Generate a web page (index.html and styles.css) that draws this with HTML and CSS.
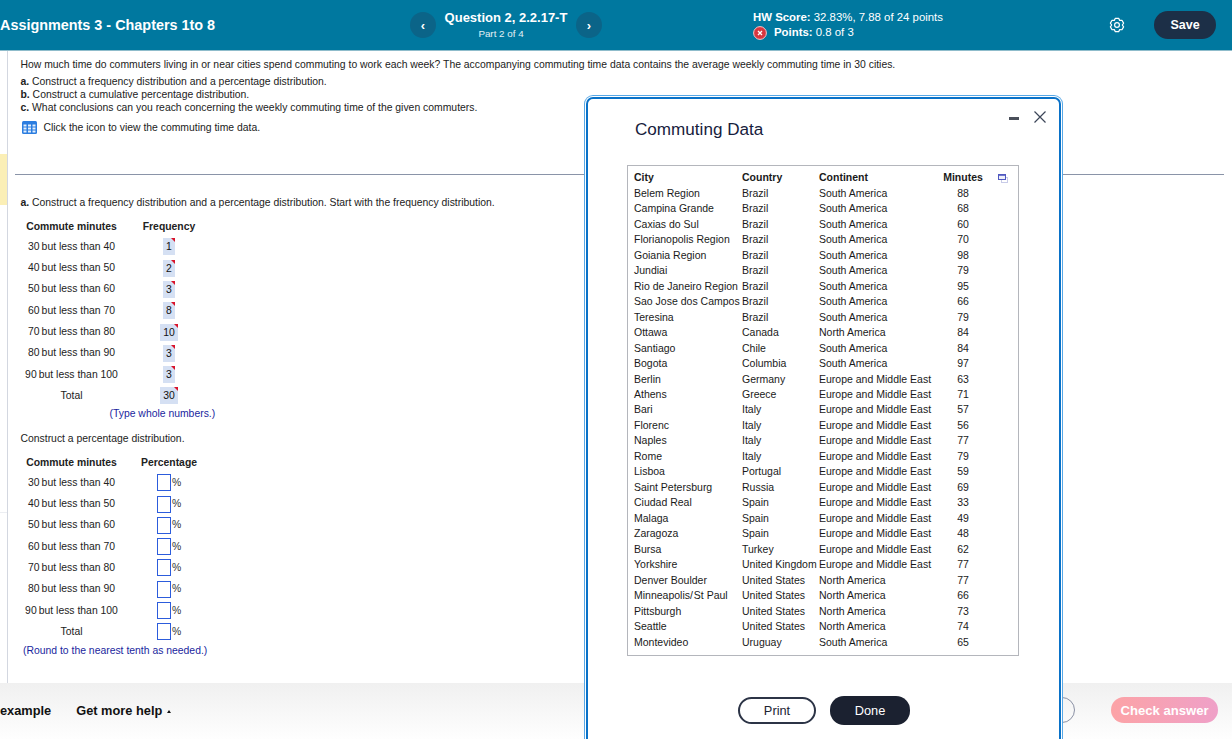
FILE: index.html
```html
<!DOCTYPE html>
<html lang="en">
<head>
<meta charset="utf-8">
<title>Assignments 3 - Chapters 1to 8</title>
<link rel="stylesheet" href="styles.css">
</head>
<body>
<div class="page">
  <header class="topbar">
    <h1 class="title">Assignments 3 - Chapters 1to 8</h1>
    <div class="nav">
      <button class="round">&#8249;</button>
      <div class="qinfo"><div class="qname">Question 2, 2.2.17-T</div><div class="qpart">Part 2 of 4</div></div>
      <button class="round">&#8250;</button>
    </div>
    <div class="score">
      <div><b>HW Score:</b> 32.83%, 7.88 of 24 points</div>
      <div class="points">
        <svg class="erricon" viewBox="0 0 14 14" width="14" height="14"><circle cx="7" cy="7" r="6.4" fill="#d8363f" stroke="#f3c9cb" stroke-width="1"/><path d="M5 5l4 4M9 5l-4 4" stroke="#fff" stroke-width="1.3" fill="none"/></svg>
        <span><b>Points:</b> 0.8 of 3</span>
      </div>
    </div>
    <svg class="gear" viewBox="0 0 24 24" width="16" height="16" fill="none" stroke="#fff" stroke-width="1.8" stroke-linejoin="round"><path d="M9.510 2.010H14.490L16 5.070L19.410 4.840L21.900 9.160L20 12L21.900 14.840L19.410 19.160L16 18.930L14.490 21.990H9.510L8 18.930L4.590 19.160L2.100 14.840L4 12L2.100 9.160L4.590 4.840L8 5.070Z"/><circle cx="12" cy="12" r="3.600"/></svg>
    <button class="save">Save</button>
  </header>

  <div class="middle">
    <aside class="gutter"><div class="tab"></div><div class="tick"></div></aside>
    <main class="content">
      <section class="question">
        <p class="lead">How much time do commuters living in or near cities spend commuting to work each week? The accompanying commuting time data contains the average weekly commuting time in 30 cities.</p>
        <p class="step"><b>a.</b> Construct a frequency distribution and a percentage distribution.</p>
        <p class="step"><b>b.</b> Construct a cumulative percentage distribution.</p>
        <p class="step"><b>c.</b> What conclusions can you reach concerning the weekly commuting time of the given commuters.</p>
        <p class="datalink">
          <svg viewBox="0 0 15 13" width="15" height="13"><rect width="15" height="13" rx="1.500" fill="#2b7de0"/><path d="M1.500 3.500h3v2h-3zM6 3.500h3v2h-3zM10.500 3.500h3v2h-3zM1.500 6.500h3v2h-3zM6 6.500h3v2h-3zM10.500 6.500h3v2h-3zM1.500 9.500h3v2h-3zM6 9.500h3v2h-3zM10.500 9.500h3v2h-3z" fill="#e4f0fc"/></svg>
          <span>Click the icon to view the commuting time data.</span>
        </p>
      </section>
      <hr class="rule">
      <section class="answer">
        <p class="parta"><b>a.</b> Construct a frequency distribution and a percentage distribution. Start with the frequency distribution.</p>
        <div class="grid">
          <div class="th">Commute minutes</div><div class="th">Frequency</div>
          <div>30&#8201;but less than 40</div><div><span class="val">1</span></div>
          <div>40&#8201;but less than 50</div><div><span class="val">2</span></div>
          <div>50&#8201;but less than 60</div><div><span class="val">3</span></div>
          <div>60&#8201;but less than 70</div><div><span class="val">8</span></div>
          <div>70&#8201;but less than 80</div><div><span class="val">10</span></div>
          <div>80&#8201;but less than 90</div><div><span class="val">3</span></div>
          <div>90&#8201;but less than 100</div><div><span class="val">3</span></div>
          <div>Total</div><div><span class="val">30</span></div>
        </div>
        <p class="hint hint1">(Type whole numbers.)</p>
        <p class="partb">Construct a percentage distribution.</p>
        <div class="grid">
          <div class="th">Commute minutes</div><div class="th">Percentage</div>
          <div>30&#8201;but less than 40</div><div class="pct"><span class="box"></span>%</div>
          <div>40&#8201;but less than 50</div><div class="pct"><span class="box"></span>%</div>
          <div>50&#8201;but less than 60</div><div class="pct"><span class="box"></span>%</div>
          <div>60&#8201;but less than 70</div><div class="pct"><span class="box"></span>%</div>
          <div>70&#8201;but less than 80</div><div class="pct"><span class="box"></span>%</div>
          <div>80&#8201;but less than 90</div><div class="pct"><span class="box"></span>%</div>
          <div>90&#8201;but less than 100</div><div class="pct"><span class="box"></span>%</div>
          <div>Total</div><div class="pct"><span class="box"></span>%</div>
        </div>
        <p class="hint hint2">(Round to the nearest tenth as needed.)</p>
      </section>
    </main>
  </div>

  <footer class="footer">
    <div class="foot-left"><b class="example">example</b><b class="help">Get more help <span class="caret"></span></b></div>
    <div class="foot-right"><span class="ghost"></span><button class="check">Check answer</button></div>
  </footer>

  <div class="modal">
    <div class="winbtns"><span class="min"></span><svg viewBox="0 0 12 12" width="12" height="12"><path d="M.5.5l11 11M11.500.5l-11 11" stroke="#3c4658" stroke-width="1.200" fill="none"/></svg></div>
    <h2 class="mtitle">Commuting Data</h2>
    <div class="databox">
      <svg class="copy" viewBox="0 0 10 9" width="10" height="9"><rect x="3.500" y="3.500" width="6" height="5" fill="#fff" stroke="#c8cbe8"/><rect x=".5" y=".5" width="7" height="5" fill="#eef0fa" stroke="#5058c0"/><path d="M.5 1.200h7" stroke="#5058c0" stroke-width="1.200"/></svg>
      <table class="data">
        <thead><tr><th class="c1">City</th><th class="c2">Country</th><th class="c3">Continent</th><th class="c4">Minutes</th></tr></thead>
        <tbody>
          <tr><td>Belem Region</td><td>Brazil</td><td>South America</td><td>88</td></tr>
          <tr><td>Campina Grande</td><td>Brazil</td><td>South America</td><td>68</td></tr>
          <tr><td>Caxias do Sul</td><td>Brazil</td><td>South America</td><td>60</td></tr>
          <tr><td>Florianopolis Region</td><td>Brazil</td><td>South America</td><td>70</td></tr>
          <tr><td>Goiania Region</td><td>Brazil</td><td>South America</td><td>98</td></tr>
          <tr><td>Jundiai</td><td>Brazil</td><td>South America</td><td>79</td></tr>
          <tr><td>Rio de Janeiro Region</td><td>Brazil</td><td>South America</td><td>95</td></tr>
          <tr><td>Sao Jose dos Campos</td><td>Brazil</td><td>South America</td><td>66</td></tr>
          <tr><td>Teresina</td><td>Brazil</td><td>South America</td><td>79</td></tr>
          <tr><td>Ottawa</td><td>Canada</td><td>North America</td><td>84</td></tr>
          <tr><td>Santiago</td><td>Chile</td><td>South America</td><td>84</td></tr>
          <tr><td>Bogota</td><td>Columbia</td><td>South America</td><td>97</td></tr>
          <tr><td>Berlin</td><td>Germany</td><td>Europe and Middle East</td><td>63</td></tr>
          <tr><td>Athens</td><td>Greece</td><td>Europe and Middle East</td><td>71</td></tr>
          <tr><td>Bari</td><td>Italy</td><td>Europe and Middle East</td><td>57</td></tr>
          <tr><td>Florenc</td><td>Italy</td><td>Europe and Middle East</td><td>56</td></tr>
          <tr><td>Naples</td><td>Italy</td><td>Europe and Middle East</td><td>77</td></tr>
          <tr><td>Rome</td><td>Italy</td><td>Europe and Middle East</td><td>79</td></tr>
          <tr><td>Lisboa</td><td>Portugal</td><td>Europe and Middle East</td><td>59</td></tr>
          <tr><td>Saint Petersburg</td><td>Russia</td><td>Europe and Middle East</td><td>69</td></tr>
          <tr><td>Ciudad Real</td><td>Spain</td><td>Europe and Middle East</td><td>33</td></tr>
          <tr><td>Malaga</td><td>Spain</td><td>Europe and Middle East</td><td>49</td></tr>
          <tr><td>Zaragoza</td><td>Spain</td><td>Europe and Middle East</td><td>48</td></tr>
          <tr><td>Bursa</td><td>Turkey</td><td>Europe and Middle East</td><td>62</td></tr>
          <tr><td>Yorkshire</td><td>United Kingdom</td><td>Europe and Middle East</td><td>77</td></tr>
          <tr><td>Denver Boulder</td><td>United States</td><td>North America</td><td>77</td></tr>
          <tr><td>Minneapolis/&#8202;St Paul</td><td>United States</td><td>North America</td><td>66</td></tr>
          <tr><td>Pittsburgh</td><td>United States</td><td>North America</td><td>73</td></tr>
          <tr><td>Seattle</td><td>United States</td><td>North America</td><td>74</td></tr>
          <tr><td>Montevideo</td><td>Uruguay</td><td>South America</td><td>65</td></tr>
        </tbody>
      </table>
    </div>
    <div class="mbtns"><button class="print">Print</button><button class="done">Done</button></div>
  </div>
</div>
</body>
</html>
```
FILE: styles.css
```css
* { box-sizing: border-box; }
html, body { margin: 0; padding: 0; height: 100%; overflow: hidden; }
body { font-family: "Liberation Sans", Arial, sans-serif; font-size: 10.4px; color: #222; background: #fff; }
p, h1, h2 { margin: 0; font-weight: normal; }
button { font-family: inherit; border: 0; padding: 0; }

.page { position: relative; width: 1232px; height: 739px; display: flex; flex-direction: column; overflow: hidden; }

.topbar { height: 51px; flex: none; background: #00789f; border-bottom: 1px solid #8fbccb; color: #fff; display: flex; align-items: center; }
.title { font-size: 14.400px; font-weight: bold; width: 410px; white-space: nowrap; }
.nav { display: flex; align-items: center; width: 193px; }
.round { width: 26px; height: 26px; border-radius: 50%; background: #0b6488; color: #fff; font-size: 13px; font-weight: bold; flex: none; }
.qinfo { width: 140px; text-align: center; }
.qname { font-size: 13px; font-weight: bold; line-height: 17px; }
.qpart { font-size: 9.800px; line-height: 15px; color: #e3f0f5; margin-right: 10px; }
.score { margin-left: 150px; width: 340px; font-size: 11.400px; line-height: 15px; }
.points { display: flex; align-items: center; gap: 7px; }
.gear { margin-left: 16px; }
.save { margin-left: 29px; width: 62px; height: 28px; border-radius: 14px; background: #1c2f47; color: #fff; font-size: 12.500px; font-weight: bold; }

.middle { flex: 1; display: flex; min-height: 0; }
.gutter { width: 8px; flex: none; border-right: 1px solid #d3d7e0; padding-top: 103px; }
.tab { height: 51px; background: #fbefb6; }
.tick { margin-top: 307px; height: 1px; background: #eceef2; }
.content { flex: 1; min-width: 0; padding-top: 7px; }

.question { padding-left: 12.500px; }
.lead { line-height: 13px; margin-bottom: 4px; }
.step { line-height: 13px; }
.datalink { display: flex; align-items: center; gap: 7px; margin-top: 6px; padding-left: 1px; height: 14px; }

.rule { border: 0; height: 1px; background: #8a94a8; margin: 40px 8px 0 7px; }

.answer { padding-left: 12.500px; }
.parta { margin-top: 21px; line-height: 13px; }
.grid { display: grid; grid-template-columns: 100px 95px; grid-template-rows: 18px repeat(8, 21.300px); margin: 9.200px 0 0 1px; text-align: center; align-items: center; }
.grid > div { line-height: 14px; }
.th { font-weight: bold; }
.val { display: inline-block; position: relative; height: 17px; line-height: 18px; padding: 0 3px; min-width: 11px; background: #d5e0f3; color: #111; vertical-align: middle; }
.val::after { content: ""; position: absolute; top: 0; right: 0; border-top: 4px solid #d9132a; border-left: 4px solid transparent; }
.pct { display: flex; align-items: center; justify-content: center; color: #333; }
.box { width: 14px; height: 17px; border: 1px solid #2c5cdc; background: #fff; margin-right: 1px; }
.hint { color: #1a1f9e; line-height: 13px; }
.hint1 { margin-top: .8px; padding-left: 89px; }
.partb { margin-top: 11.600px; line-height: 13px; }
.hint2 { margin-top: 1px; padding-left: 2.500px; }

.footer { height: 56px; flex: none; background: linear-gradient(#f0f0f0, #fefefe); display: flex; align-items: center; justify-content: space-between; padding-right: 14px; font-size: 12.800px; color: #111; }
.foot-left { display: flex; gap: 25px; padding-bottom: 2px; }
.caret { display: inline-block; width: 0; height: 0; border-left: 2.500px solid transparent; border-right: 2.500px solid transparent; border-bottom: 3px solid #111; vertical-align: 2px; margin-left: 1px; }
.foot-right { display: flex; align-items: center; gap: 36px; padding-bottom: 2px; }
.ghost { width: 60px; height: 26px; border: 1px solid #8a90a4; border-radius: 13px; }
.check { width: 107px; height: 26px; border-radius: 13px; background: linear-gradient(90deg, #fca3a6, #efa0c8); color: #fff; font-size: 13.100px; font-weight: bold; }

.modal { position: absolute; left: 586px; top: 97px; width: 475px; height: 660px; background: #fff; border: 2px solid #0a72c8; border-radius: 7px; box-shadow: 0 0 0 1px #fff, 0 0 0 2px #58a8e6; display: flex; flex-direction: column; align-items: stretch; }
.winbtns { position: absolute; right: 13px; top: 12px; display: flex; align-items: center; gap: 15px; }
.min { width: 10px; height: 3px; background: #4a4f5a; margin-top: 3px; }
.mtitle { font-size: 17.100px; color: #16203c; line-height: 22px; margin: 20px 0 0 47px; }
.databox { position: relative; margin: 24px 0 0 39px; width: 392px; height: 491px; border: 1px solid #b4b6bc; padding: 3.500px 0 0 6px; }
.copy { position: absolute; left: 370px; top: 8px; }
.data { border-collapse: collapse; table-layout: fixed; width: 351px; color: #1a1a1a; font-size: 10.500px; }
.data th, .data td { padding: 0; height: 15.480px; line-height: 15px; text-align: left; white-space: nowrap; font-weight: normal; }
.data th { font-weight: bold; height: 16.200px; }
.data td:nth-child(4), .data th:nth-child(4) { text-align: center; }
.c1 { width: 108px; }
.c2 { width: 77px; }
.c3 { width: 122px; }
.c4 { width: 44px; }
.mbtns { display: flex; justify-content: center; gap: 14px; margin-top: 40.300px; align-items: center; padding-left: 1px; }
.print { width: 78px; height: 27px; border-radius: 14px; border: 2px solid #2c3446; background: #fff; color: #1c2433; font-size: 12.800px; }
.done { width: 80px; height: 29px; border-radius: 14px; background: #1b2130; color: #fff; font-size: 12.800px; }
```
